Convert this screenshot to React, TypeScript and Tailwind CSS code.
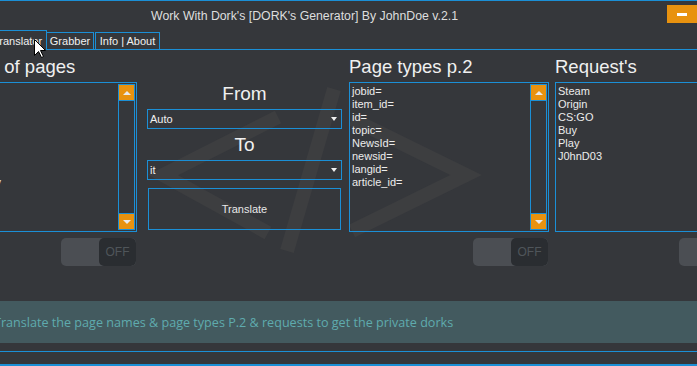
import React from 'react';

const pageNames = ['index', 'page', 'news', 'item', 'product', 'games', 'shop', 'subcategory'];
const pageTypes = ['jobid=', 'item_id=', 'id=', 'topic=', 'NewsId=', 'newsid=', 'langid=', 'article_id='];
const requests = ['Steam', 'Origin', 'CS:GO', 'Buy', 'Play', 'J0hnD03'];

const ScrollBar: React.FC = () => (
  <div className="absolute right-[1px] top-[1px] bottom-[1px] flex w-[17px] flex-col border border-[#1b8fd6]">
    <div className="flex h-[16px] items-center justify-center border-b border-[#1b8fd6] bg-[#e8920f]">
      <div className="h-0 w-0 border-x-[4px] border-b-[4px] border-x-transparent border-b-[#e9e9e9]" />
    </div>
    <div className="flex-1" />
    <div className="flex h-[16px] items-center justify-center border-t border-[#1b8fd6] bg-[#e8920f]">
      <div className="h-0 w-0 border-x-[4px] border-t-[4px] border-x-transparent border-t-[#e9e9e9]" />
    </div>
  </div>
);

const ListBox: React.FC<{ items: string[]; scroll?: boolean; pad?: string }> = ({ items, scroll, pad }) => (
  <div className={`relative mt-[4px] h-[150px] overflow-hidden border border-[#1b8fd6] pt-[2px] ${pad ?? 'pl-[2px]'}`}>
    {items.map((it) => (
      <div key={it} className="h-[13px] text-[11px] leading-[13px] text-[#ececec] whitespace-nowrap">
        {it}
      </div>
    ))}
    {scroll && <ScrollBar />}
  </div>
);

const Toggle: React.FC = () => (
  <div className="mt-[6px] mr-[1px] flex h-[28px] w-[75px] self-end overflow-hidden rounded-[5px] bg-[#4b4e53]">
    <div className="w-[38px]" />
    <div className="flex flex-1 items-center justify-center rounded-[5px] bg-[#2a2d31] text-[12px] text-[#4f555a]">
      OFF
    </div>
  </div>
);

const Combo: React.FC<{ value: string; className?: string }> = ({ value, className }) => (
  <div className={`flex h-[20px] items-center justify-between border border-[#1b8fd6] pl-[2px] pr-[4px] ${className ?? ''}`}>
    <span className="text-[11px] text-[#f0f0f0]">{value}</span>
    <div className="h-0 w-0 border-x-[3.5px] border-t-[4px] border-x-transparent border-t-[#f0f0f0]" />
  </div>
);

const Heading: React.FC<{ children: React.ReactNode; className?: string }> = ({ children, className }) => (
  <div className={`h-[22px] text-[18.5px] leading-[22px] text-[#f0f0f0] whitespace-nowrap ${className ?? ''}`}>{children}</div>
);

export default function App() {
  return (
    <div className="relative flex h-[366px] w-[697px] flex-col overflow-hidden border-t border-[#1b8fd6] bg-[#35373b] font-['Liberation_Sans',Arial,sans-serif]">
      {/* watermark </> */}
      <svg className="pointer-events-none absolute left-0 top-0" width="697" height="366">
        <g fill="none" stroke="#3d3e40" strokeWidth="14">
          <polyline points="278,116 163,174 268,232" />
          <line x1="334" y1="88" x2="287" y2="250" />
          <polyline points="352,118 466,174 352,230" />
        </g>
      </svg>

      {/* title bar */}
      <div className="relative flex h-[29px] items-start">
        <div className="ml-[151px] mt-[8px] text-[12.3px] leading-[14px] text-[#dedede] whitespace-nowrap">
          Work With Dork's [DORK's Generator] By JohnDoe v.2.1
        </div>
        <div className="ml-auto mt-[4px] flex h-[18px] w-[30px] items-center justify-center bg-[#e8920f]">
          <div className="h-[3px] w-[10px] bg-white" />
        </div>
      </div>

      {/* tabs */}
      <div className="relative flex h-[20px] items-end border-b border-[#1b8fd6] text-[11px] text-[#f0f0f0]">
        <div className="relative z-10 -mb-px ml-[-10px] flex h-[20px] w-[57px] shrink-0 items-center border-t border-r border-[#1b8fd6] bg-[#35373b] pl-[3px] pt-[1px]">
          Translator
        </div>
        <div className="ml-[-1px] flex h-[17px] w-[48px] shrink-0 items-center justify-center border-x border-t border-[#1b8fd6]">
          Grabber
        </div>
        <div className="ml-[1px] flex h-[17px] w-[65px] shrink-0 items-center justify-center border-x border-t border-[#1b8fd6]">
          Info | About
        </div>
      </div>

      {/* content */}
      <div className="relative ml-[-63px] flex h-[251px]">
        <div className="flex w-[200px] shrink-0 flex-col pt-[6px]">
          <Heading>Name's of pages</Heading>
          <ListBox items={pageNames} scroll pad="pl-[3px]" />
          <Toggle />
        </div>

        <div className="ml-[10px] flex w-[195px] shrink-0 flex-col pt-[33px]">
          <div className="h-[22px] text-center text-[19px] leading-[22px] text-[#f0f0f0]">From</div>
          <Combo value="Auto" className="mt-[4px]" />
          <div className="mt-[5px] h-[22px] text-center text-[19px] leading-[22px] text-[#f0f0f0]">To</div>
          <Combo value="it" className="mt-[4px]" />
          <div className="mx-[1px] mt-[8px] flex h-[42px] items-center justify-center border border-[#1b8fd6] text-[11px] text-[#e8e8e8]">
            Translate
          </div>
        </div>

        <div className="ml-[7px] flex w-[200px] shrink-0 flex-col pt-[6px]">
          <Heading>Page types p.2</Heading>
          <ListBox items={pageTypes} scroll />
          <Toggle />
        </div>

        <div className="ml-[6px] flex w-[200px] shrink-0 flex-col pt-[6px]">
          <Heading>Request's</Heading>
          <ListBox items={requests} />
          <Toggle />
        </div>
      </div>

      {/* info bar */}
      <div className="flex h-[42px] items-center bg-[#435a5f] pt-[3px]">
        <span className="ml-[-6px] font-['Open_Sans',sans-serif] text-[12.6px] text-[#5fabae] whitespace-nowrap">
          Translate the page names &amp; page types P.2 &amp; requests to get the private dorks
        </span>
      </div>

      <div className="mt-[8px] h-[13px] border-t border-[#1b8fd6]" />
      <div className="h-[2px] bg-[#1b8fd6]" />

      {/* mouse cursor */}
      <svg className="pointer-events-none absolute left-[34px] top-[38px] z-20" width="13" height="20" viewBox="0 0 13 20">
        <path d="M0.5 0.5 V16.5 L4.5 12.5 L7.5 18.5 L9.5 17.5 L6.5 11.5 H11.5 Z" fill="#ffffff" stroke="#000000" strokeWidth="1" />
      </svg>
    </div>
  );
}
